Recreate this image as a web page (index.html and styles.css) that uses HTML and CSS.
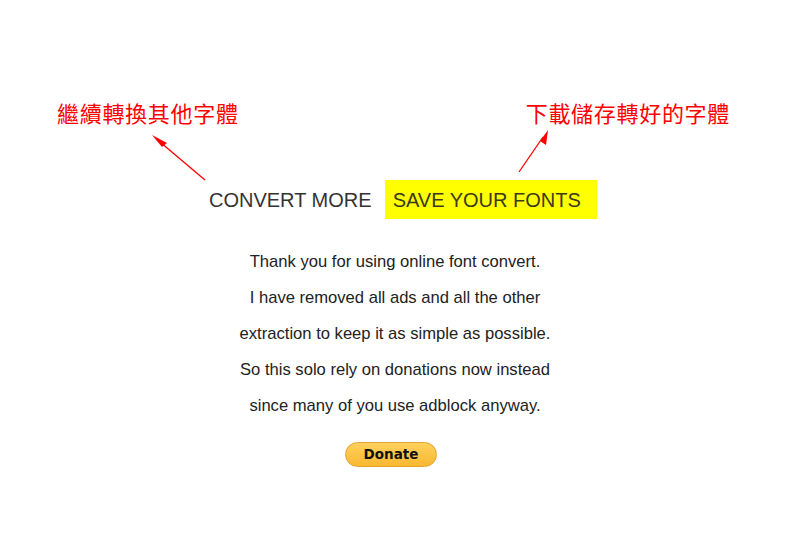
FILE: index.html
```html
<!DOCTYPE html>
<html lang="zh-Hant">
<head>
<meta charset="utf-8">
<title>Convert complete</title>
<link rel="stylesheet" href="styles.css">
</head>
<body>
<div class="page">
  <div class="notes">
    <span class="note note-left">繼續轉換其他字體</span>
    <span class="note note-right">下載儲存轉好的字體</span>
  </div>
  <div class="actions">
    <a class="btn btn-more" href="#">CONVERT MORE</a>
    <a class="btn btn-save" href="#">SAVE YOUR FONTS</a>
  </div>
  <div class="message">
    <p>Thank you for using online font convert.</p>
    <p>I have removed all ads and all the other</p>
    <p>extraction to keep it as simple as possible.</p>
    <p>So this solo rely on donations now instead</p>
    <p>since many of you use adblock anyway.</p>
  </div>
  <div class="donate-row">
    <button class="donate" type="button">Donate</button>
  </div>
  <svg class="arrows" width="805" height="541" viewBox="0 0 805 541">
    <g stroke="#ff0000" stroke-width="1.3" fill="#ff0000">
      <line x1="205" y1="180" x2="160" y2="142"/>
      <polygon points="152,135 167,143 162,147" stroke="none"/>
      <line x1="519" y1="172" x2="543" y2="137"/>
      <polygon points="548,130 546,145 540,141" stroke="none"/>
    </g>
  </svg>
</div>
</body>
</html>
```

FILE: styles.css
```css
html, body {
  margin: 0;
  padding: 0;
  background: #ffffff;
}

.page {
  position: relative;
  width: 805px;
  height: 541px;
  font-family: "Liberation Sans", Arial, sans-serif;
  color: #333333;
}

.notes {
  display: flex;
  justify-content: space-between;
  padding: 97px 75px 0 57px;
  height: 31px;
}

.note {
  font-family: "Noto Sans CJK TC", "Noto Sans CJK SC", sans-serif;
  font-size: 22px;
  line-height: 31px;
  color: #ff0000;
  letter-spacing: 0.7px;
}

.actions {
  display: flex;
  justify-content: flex-start;
  align-items: center;
  padding: 52px 0 0 209px;
  height: 39px;
}

.btn {
  font-size: 20px;
  line-height: 37px;
  padding-top: 2px;
  color: #333333;
  text-decoration: none;
  white-space: nowrap;
}

.btn-more {
  margin-right: 13px;
}

.btn-save {
  background: #ffff00;
  padding-left: 8px;
  padding-right: 16px;
  color: #3a3a1a;
}

.message {
  width: 420px;
  margin: 25px 0 0 185px;
  text-align: center;
  font-size: 16.6px;
  line-height: 36px;
  color: #222222;
}

.message p {
  margin: 0;
}

.donate-row {
  display: flex;
  padding: 18px 0 0 345px;
}

.donate {
  width: 92px;
  height: 25px;
  border: 1px solid #e4a232;
  border-radius: 13px;
  background: linear-gradient(#ffd15c, #f8b831);
  font-family: "DejaVu Sans", Verdana, sans-serif;
  font-weight: bold;
  font-size: 13.5px;
  color: #111111;
  padding: 0;
  line-height: 23px;
}

.arrows {
  position: absolute;
  left: 0;
  top: 0;
  pointer-events: none;
}
```
